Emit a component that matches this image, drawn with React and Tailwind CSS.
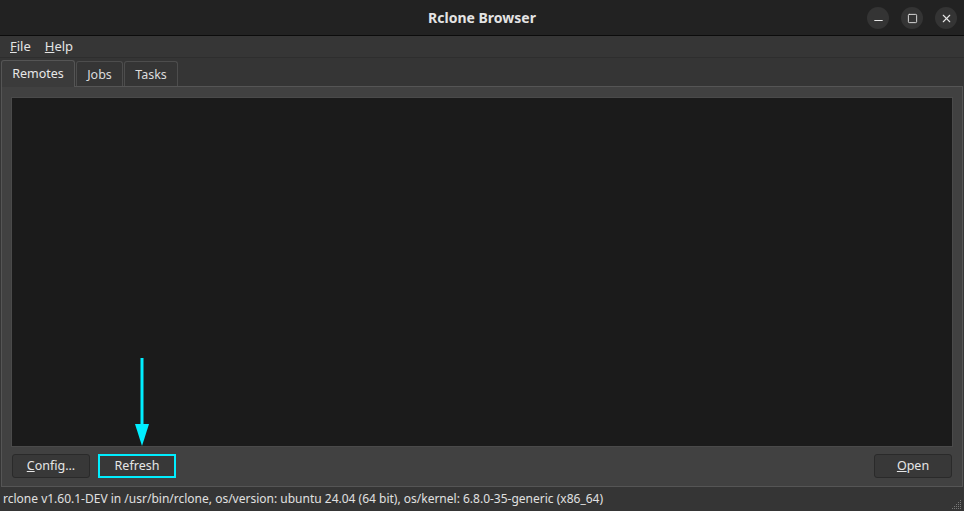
import { Minus, Square, X } from "lucide-react";

const font = { fontFamily: '"Noto Sans", "Open Sans", sans-serif' };

const WinButton = ({ children }) => (
  <div className="w-[22px] h-[22px] rounded-full bg-[#343434] flex items-center justify-center text-[#e6e6e6]">
    {children}
  </div>
);

const Tab = ({ label, active, width }) =>
  active ? (
    <div className={`h-[27px] ${width} flex items-center justify-center pt-[1px] bg-[#3b3b3b] border border-b-0 border-[#555] rounded-t-[3px] text-[#e8e8e8] text-[12.5px] -mb-px z-10`}>
      {label}
    </div>
  ) : (
    <div className={`h-[25px] ${width} flex items-center justify-center pt-[2px] bg-[#353535] border border-b-0 border-[#4d4d4d] rounded-t-[3px] text-[#dcdcdc] text-[12.5px]`}>
      {label}
    </div>
  );

const Button = ({ children, className = "border border-[#2a2a2a] rounded-[3px]" }) => (
  <div
    className={`h-[24px] w-[78px] flex items-center justify-center bg-[#383838] text-[#e6e6e6] text-[12.5px] ${className}`}
  >
    {children}
  </div>
);

export default function App() {
  return (
    <div className="w-[964px] h-[511px] bg-[#353535] flex flex-col overflow-hidden" style={font}>
      <div className="h-[36px] bg-[#222222] border-b border-[#0c0c0c] relative flex items-center justify-center shrink-0">
        <span className="text-[14px] font-bold text-[#e4e4e4]">Rclone Browser</span>
        <div className="absolute right-[7px] top-[7px] flex gap-[12px]">
          <WinButton>
            <Minus size={13} strokeWidth={2} className="mt-[5px]" />
          </WinButton>
          <WinButton>
            <Square size={11} strokeWidth={2} />
          </WinButton>
          <WinButton>
            <X size={13} strokeWidth={2} />
          </WinButton>
        </div>
      </div>

      <div className="h-[22px] bg-[#363636] border-b border-[#2e2e2e] flex items-center gap-[14px] px-[10px] pt-[1px] text-[13px] text-[#e4e4e4] shrink-0">
        <span>
          <u>F</u>ile
        </span>
        <span>
          <u>H</u>elp
        </span>
      </div>

      <div className="flex flex-col flex-1 px-[1px] pt-[1px] bg-[#353535]">
        <div className="flex items-end gap-[1px] h-[27px]">
          <Tab label="Remotes" width="w-[74px]" active />
          <Tab label="Jobs" width="w-[47px]" />
          <Tab label="Tasks" width="w-[54px]" />
        </div>
        <div className="h-[401px] bg-[#414141] border border-[#555] flex flex-col px-[9px] pt-[10px] pb-[8px] relative">
          <div className="flex-1 bg-[#1b1b1b] border border-[#4a4a4a]" />
          <div className="flex items-center mt-[7px] gap-[8px] pl-[1px] pr-[1px]">
            <Button>
              <span>
                <u>C</u>onfig...
              </span>
            </Button>
            <Button className="border-2 border-[#00eeff]">Refresh</Button>
            <div className="flex-1" />
            <Button>
              <span>
                <u>O</u>pen
              </span>
            </Button>
          </div>
          <svg className="absolute left-[129px] top-[271px]" width="22" height="90" viewBox="0 0 22 90">
            <rect x="9.5" y="0" width="3" height="72" fill="#00eeff" />
            <polygon points="4,66 18,66 11,88" fill="#00eeff" />
          </svg>
        </div>
        <div className="flex-1 flex items-center relative">
          <span className="text-[12px] text-[#e0e0e0] pl-[2px]">
            rclone v1.60.1-DEV in /usr/bin/rclone, os/version: ubuntu 24.04 (64 bit), os/kernel: 6.8.0-35-generic (x86_64)
          </span>
          <svg className="absolute right-[1px] bottom-[1px]" width="10" height="10" viewBox="0 0 10 10">
            {[
              [8, 0], [6, 2], [8, 2], [4, 4], [6, 4], [8, 4], [2, 6], [4, 6], [6, 6], [8, 6], [0, 8], [2, 8], [4, 8], [6, 8], [8, 8],
            ].map(([x, y], i) => (
              <rect key={i} x={x} y={y} width="1" height="1" fill="#777" />
            ))}
          </svg>
        </div>
      </div>
    </div>
  );
}
